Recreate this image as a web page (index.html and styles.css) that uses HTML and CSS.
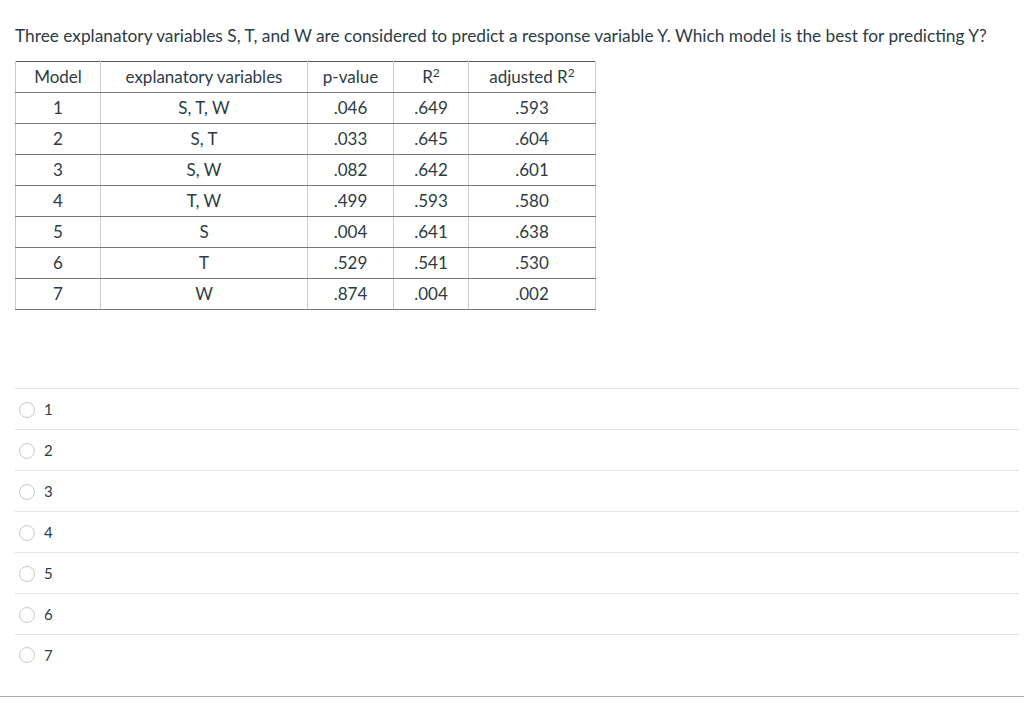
FILE: index.html
```html
<!DOCTYPE html>
<html>
<head>
<meta charset="utf-8">
<link rel="stylesheet" href="styles.css">
</head>
<body>
<div class="question">
  <p class="prompt">Three explanatory variables S, T, and W are considered to predict a response variable Y. Which model is the best for predicting Y?</p>
  <table class="data">
    <thead>
      <tr><th class="c1">Model</th><th class="c2">explanatory variables</th><th class="c3">p-value</th><th class="c4">R<sup>2</sup></th><th class="c5">adjusted R<sup>2</sup></th></tr>
    </thead>
    <tbody>
      <tr><td>1</td><td>S, T, W</td><td>.046</td><td>.649</td><td>.593</td></tr>
      <tr><td>2</td><td>S, T</td><td>.033</td><td>.645</td><td>.604</td></tr>
      <tr><td>3</td><td>S, W</td><td>.082</td><td>.642</td><td>.601</td></tr>
      <tr><td>4</td><td>T, W</td><td>.499</td><td>.593</td><td>.580</td></tr>
      <tr><td>5</td><td>S</td><td>.004</td><td>.641</td><td>.638</td></tr>
      <tr><td>6</td><td>T</td><td>.529</td><td>.541</td><td>.530</td></tr>
      <tr><td>7</td><td>W</td><td>.874</td><td>.004</td><td>.002</td></tr>
    </tbody>
  </table>
  <div class="answers">
    <label class="answer"><span class="radio"></span><span class="label">1</span></label>
    <label class="answer"><span class="radio"></span><span class="label">2</span></label>
    <label class="answer"><span class="radio"></span><span class="label">3</span></label>
    <label class="answer"><span class="radio"></span><span class="label">4</span></label>
    <label class="answer"><span class="radio"></span><span class="label">5</span></label>
    <label class="answer"><span class="radio"></span><span class="label">6</span></label>
    <label class="answer"><span class="radio"></span><span class="label">7</span></label>
  </div>
</div>
<div class="footer-rule"></div>
</body>
</html>
```
FILE: styles.css
```css
html, body {
  margin: 0;
  padding: 0;
  background: #fff;
}
body {
  font-family: Lato, "Liberation Sans", sans-serif;
  color: #2d3b45;
  font-size: 17px;
}
.question {
  padding: 0 5px 0 15px;
}
.prompt {
  margin: 0;
  padding-top: 26px;
  line-height: 20px;
  height: 35px;
  font-size: 17.3px;
}
.data {
  border-collapse: collapse;
  border: 1px solid #555;
  width: 581px;
  font-size: 17px;
}
.data th, .data td {
  font-weight: normal;
  text-align: center;
  padding: 0;
  height: 30px;
  border-left: 1px solid #ccc;
  border-right: 1px solid #ccc;
  border-bottom: 1px solid #777;
  line-height: 20px;
}
.data sup {
  font-size: 12px;
  line-height: 0;
  vertical-align: 6px;
}
.c1 { width: 84px; }
.c2 { width: 206px; }
.c3 { width: 85px; }
.c4 { width: 74px; }
.c5 { width: 126px; }
.answers {
  margin-top: 78px;
}
.answer {
  display: flex;
  align-items: center;
  height: 40px;
  border-top: 1px solid #e2e2e2;
  font-size: 15px;
}
.radio {
  width: 14px;
  height: 14px;
  border: 1px solid #c8c8c8;
  border-radius: 50%;
  margin-left: 4px;
  margin-right: 9px;
  margin-top: 2px;
}
.label {
  line-height: 20px;
}
.answer:last-child {
  height: 61px;
  align-items: flex-start;
}
.answer:last-child .radio { margin-top: 12px; }
.answer:last-child .label { margin-top: 10px; }
.footer-rule {
  border-top: 1px solid #aaa;
}
```
